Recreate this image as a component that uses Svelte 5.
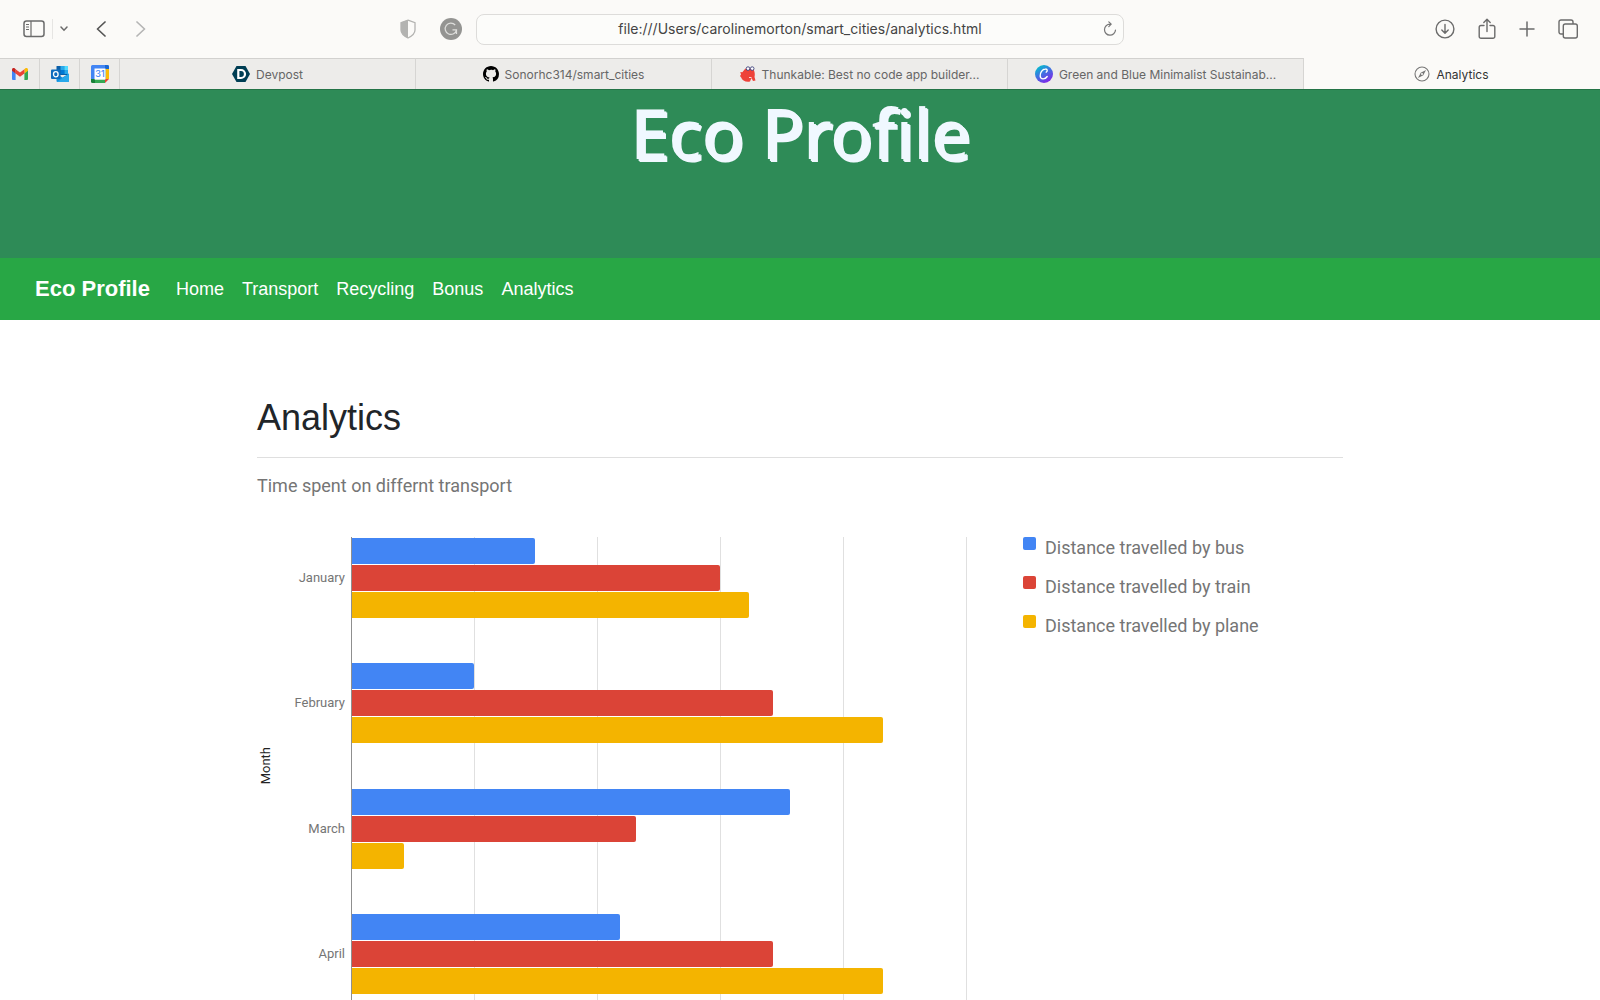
<script lang="ts">
  type Series = 'bus' | 'train' | 'plane';

  const url = 'file:///Users/carolinemorton/smart_cities/analytics.html';

  const tabs = [
    { icon: 'devpost', title: 'Devpost' },
    { icon: 'github', title: 'Sonorhc314/smart_cities' },
    { icon: 'thunkable', title: 'Thunkable: Best no code app builder...' },
    { icon: 'canva', title: 'Green and Blue Minimalist Sustainab...' },
    { icon: 'compass', title: 'Analytics', active: true }
  ];

  const links = ['Home', 'Transport', 'Recycling', 'Bonus', 'Analytics'];

  const series: Series[] = ['bus', 'train', 'plane'];

  const maxDistance = 1000;

  const months = [
    { name: 'January', bus: 298, train: 598, plane: 646 },
    { name: 'February', bus: 198, train: 684, plane: 864 },
    { name: 'March', bus: 712, train: 462, plane: 85 },
    { name: 'April', bus: 436, train: 684, plane: 864 }
  ];

  const barWidth = (value: number) => `${(value / maxDistance) * 100}%`;
</script>

<div class="browser">
  <div class="toolbar">
    <div class="tools left">
      <button class="tool" aria-label="Sidebar">
        <svg width="22" height="18" viewBox="0 0 22 18" fill="none" stroke="#6b6b6b" stroke-width="1.5">
          <rect x="1" y="1" width="20" height="15.5" rx="2.5" />
          <path d="M8 1v15.500M3 4.500h3M3 7h3M3 9.500h3" stroke-width="1.200" />
        </svg>
      </button>
      <span class="divider"></span>
      <button class="tool" aria-label="Tab groups">
        <svg width="8" height="6" viewBox="0 0 8 6" fill="none" stroke="#6b6b6b" stroke-width="1.500" stroke-linecap="round">
          <path d="M1 1l3 3.200L7 1" />
        </svg>
      </button>
      <button class="tool back" aria-label="Back">
        <svg width="10" height="16" viewBox="0 0 10 16" fill="none" stroke="#555" stroke-width="1.700" stroke-linecap="round" stroke-linejoin="round">
          <path d="M9 1L1.500 8 9 15" />
        </svg>
      </button>
      <button class="tool forward" aria-label="Forward">
        <svg width="10" height="16" viewBox="0 0 10 16" fill="none" stroke="#b5b5b5" stroke-width="1.700" stroke-linecap="round" stroke-linejoin="round">
          <path d="M1 1l7.500 7L1 15" />
        </svg>
      </button>
      <button class="tool shield" aria-label="Privacy report">
        <svg width="16" height="20" viewBox="0 0 16 20">
          <path d="M8 1.200L15 3.700V11c0 3.500-3 6-7 8-4-2-7-4.500-7-8V3.700z" fill="none" stroke="#b3b3b1" stroke-width="1.300" />
          <path d="M8 1L1 3.600V11c0 3.500 3 6 7 8z" fill="#b3b3b1" />
        </svg>
      </button>
      <button class="tool" aria-label="Grammarly">
        <svg width="22" height="22" viewBox="0 0 22 22">
          <circle cx="11" cy="11" r="11" fill="#949492" />
          <path d="M15.200 7A5.700 5.700 0 1 0 16.500 11.800H12.500M16.500 11.800v4.200" fill="none" stroke="#deDEdc" stroke-width="1.200" />
        </svg>
      </button>
    </div>

    <div class="address">
      <input type="text" value={url} aria-label="Address" />
      <button class="tool reload" aria-label="Reload">
        <svg width="14" height="16" viewBox="0 0 14 16" fill="none" stroke="#777" stroke-width="1.200" stroke-linecap="round" stroke-linejoin="round">
          <path d="M8 3.200H7A5.500 5.500 0 1 0 12.500 9M5.800.8L8.200 3.200 5.800 5.600" />
        </svg>
      </button>
    </div>

    <div class="tools right">
      <button class="tool" aria-label="Downloads">
        <svg width="20" height="20" viewBox="0 0 20 20" fill="none" stroke="#6b6b6b" stroke-width="1.400" stroke-linecap="round" stroke-linejoin="round">
          <circle cx="10" cy="10" r="8.900" />
          <path d="M10 5.500v8.500M6.800 11l3.200 3.200 3.200-3.200" />
        </svg>
      </button>
      <button class="tool" aria-label="Share">
        <svg width="18" height="22" viewBox="0 0 18 22" fill="none" stroke="#6b6b6b" stroke-width="1.400" stroke-linecap="round" stroke-linejoin="round">
          <path d="M6 7.500H3a1.800 1.800 0 0 0-1.800 1.800v9.200A1.800 1.800 0 0 0 3 20.300h12a1.800 1.800 0 0 0 1.800-1.800V9.300A1.800 1.800 0 0 0 15 7.500h-3M9 13.500V1.500M5.800 4.400L9 1.200l3.200 3.200" />
        </svg>
      </button>
      <button class="tool" aria-label="New tab">
        <svg width="16" height="16" viewBox="0 0 16 16" stroke="#6b6b6b" stroke-width="1.500" stroke-linecap="round">
          <path d="M8 1v14M1 8h14" />
        </svg>
      </button>
      <button class="tool" aria-label="Tab overview">
        <svg width="20" height="20" viewBox="0 0 20 20" fill="none" stroke="#6b6b6b" stroke-width="1.400">
          <rect x="5.300" y="5" width="14" height="14" rx="2" />
          <path d="M5.300 15H3a2 2 0 0 1-2-2V3a2 2 0 0 1 2-2h10a2 2 0 0 1 2 2v2" />
        </svg>
      </button>
    </div>
  </div>

  <div class="tab-bar">
    <button class="pinned" aria-label="Gmail">
      <svg width="16" height="12" viewBox="0 0 16 12">
        <path d="M0 2v9a1 1 0 0 0 1 1h2.600V5z" fill="#4285f4" />
        <path d="M16 2v9a1 1 0 0 1-1 1h-2.600V5z" fill="#34a853" />
        <path d="M12.400 1.200V5.500L16 2.800V1.500C16 .2 14.500-.5 13.400.3z" fill="#fbbc04" />
        <path d="M3.600 5.500V1.200L8 4.500l4.400-3.300V5.500L8 8.800z" fill="#ea4335" />
        <path d="M0 1.500v1.300l3.600 2.700V1.200L2.600.3C1.500-.5 0 .2 0 1.500z" fill="#c5221f" />
      </svg>
    </button>
    <button class="pinned" aria-label="Outlook">
      <svg width="18" height="16" viewBox="0 0 18 16">
        <path d="M6 0h10.500a.5.5 0 0 1 .5.500V9H5.500V.500A.5.5 0 0 1 6 0z" fill="#0a5ea8" />
        <path d="M9.500 0h3.800v4H9.500zM13.300 4H17v4h-3.700z" fill="#28a8ea" />
        <path d="M13.300 0H17v4h-3.700z" fill="#50d9ff" />
        <path d="M9.500 4h3.800v4H9.500z" fill="#0078d4" />
        <path d="M5.500 8l6 3.500L18 7.500V15a1 1 0 0 1-1 1H6.500a1 1 0 0 1-1-1z" fill="#1490df" />
        <path d="M18 7.500L6 15.900h11a1 1 0 0 0 1-1z" fill="#28a8ea" />
        <rect y="3.500" width="9.500" height="9.500" rx="1" fill="#0f6cbd" />
        <ellipse cx="4.800" cy="8.200" rx="2.300" ry="2.600" fill="none" stroke="#fff" stroke-width="1.300" />
      </svg>
    </button>
    <button class="pinned" aria-label="Calendar">
      <svg width="18" height="18" viewBox="0 0 18 18">
        <path d="M1.500 0H16.500A1.500 1.500 0 0 1 18 1.500V14H14V4H4v10H0V1.500A1.500 1.500 0 0 1 1.500 0z" fill="#4285f4" />
        <path d="M14 0h2.500A1.500 1.500 0 0 1 18 1.500V4h-4z" fill="#1967d2" />
        <path d="M14.500 4H18v10h-3.500z" fill="#fbbc04" />
        <path d="M4 14.500h10V18H4z" fill="#34a853" />
        <path d="M0 14h4v4H1.500A1.500 1.500 0 0 1 0 16.500z" fill="#188038" />
        <path d="M14 14h4l-4 4z" fill="#ea4335" />
        <path d="M3.500 3.500h11v11h-11z" fill="#fff" />
        <text x="9" y="12" text-anchor="middle" font-size="9" font-weight="500" fill="#4285f4">31</text>
      </svg>
    </button>

    {#each tabs as tab}
      <button class="tab" class:active={tab.active}>
        {#if tab.icon === 'devpost'}
          <svg width="18" height="18" viewBox="0 0 18 18">
            <path d="M4.500 1h9L18 9l-4.500 8h-9L0 9z" fill="#003e54" />
            <path d="M6.300 5v8H9a4 4 0 0 0 0-8z" fill="none" stroke="#fff" stroke-width="2.200" />
          </svg>
        {:else if tab.icon === 'github'}
          <svg width="16" height="16" viewBox="0 0 16 16">
            <path d="M8 0C3.580 0 0 3.580 0 8c0 3.540 2.290 6.530 5.470 7.590.4.070.55-.17.55-.38 0-.19-.01-.82-.01-1.490-2.010.37-2.530-.49-2.690-.94-.09-.23-.48-.94-.82-1.130-.28-.15-.68-.52-.01-.53.63-.01 1.080.58 1.230.82.72 1.210 1.870.87 2.330.66.070-.52.28-.87.51-1.070-1.780-.2-3.640-.89-3.640-3.950 0-.87.31-1.590.82-2.150-.08-.2-.36-1.020.08-2.120 0 0 .67-.21 2.200.82A7.600 7.600 0 0 1 8 3.860c.68 0 1.360.09 2 .27 1.530-1.040 2.200-.82 2.200-.82.44 1.100.16 1.920.08 2.120.51.56.82 1.270.82 2.150 0 3.070-1.870 3.750-3.650 3.950.29.25.54.73.54 1.480 0 1.070-.01 1.930-.01 2.200 0 .21.15.46.55.38A8.010 8.010 0 0 0 16 8c0-4.420-3.580-8-8-8z" fill="#000" />
          </svg>
        {:else if tab.icon === 'thunkable'}
          <svg width="16" height="16" viewBox="0 0 16 16">
            <path d="M5 3c2-1.500 6-1 8.500.5C15 6 15 9 14.500 11l1 3.500-2.500.500-1.500-3-1.500 3.500C6 16.500 2 14.500 1.200 11.500L0 10l1-1.500L.3 6l2 .2z" fill="#ee4239" />
            <path d="M9 11.500h2.500" stroke="#fff" stroke-width="0.800" />
            <circle cx="8" cy="2.600" r="1.800" fill="#fff" stroke="#3b3f7a" stroke-width="0.900" />
            <circle cx="12.200" cy="2.600" r="1.800" fill="#fff" stroke="#3b3f7a" stroke-width="0.900" />
          </svg>
        {:else if tab.icon === 'canva'}
          <svg width="18" height="18" viewBox="0 0 18 18">
            <defs>
              <linearGradient id="canva" x1="0" y1="0" x2="0.600" y2="1">
                <stop offset="0.100" stop-color="#00c4cc" />
                <stop offset="0.500" stop-color="#3a78e0" />
                <stop offset="1" stop-color="#7d2ae8" />
              </linearGradient>
            </defs>
            <circle cx="9" cy="9" r="9" fill="url(#canva)" />
            <path d="M11.200 7.200c1.600-.8 1.300-3.400-.8-3.200C7.200 4.200 5 8 5.200 11c.2 3.800 4.800 3.800 7 .5" fill="none" stroke="#fff" stroke-width="1.400" stroke-linecap="round" />
          </svg>
        {:else}
          <svg width="16" height="16" viewBox="0 0 16 16">
            <circle cx="8" cy="8" r="7" fill="none" stroke="#777" stroke-width="1.100" />
            <path d="M12 4L9.300 9.300 4 12l2.700-5.300z" fill="#777" />
            <circle cx="8" cy="8" r="1" fill="#fbfaf8" />
          </svg>
        {/if}
        <span>{tab.title}</span>
      </button>
    {/each}
  </div>
</div>

<header class="banner">
  <p class="banner-title">Eco Profile</p>
</header>

<nav class="navbar">
  <a href="#home" class="brand">Eco Profile</a>
  {#each links as link}
    <a href="#{link.toLowerCase()}" class="nav-link">{link}</a>
  {/each}
</nav>

<main class="container">
  <h1>Analytics</h1>
  <p class="chart-title">Time spent on differnt transport</p>

  <div class="chart">
    <div class="axis-title"><span>Month</span></div>

    <div class="months">
      {#each months as month}
        <div class="month">{month.name}</div>
      {/each}
    </div>

    <div class="plot">
      {#each months as month}
        <div class="group">
          {#each series as name}
            <div class="bar {name}" style="width: {barWidth(month[name])}"></div>
          {/each}
        </div>
      {/each}
    </div>

    <ul class="legend">
      {#each series as name}
        <li>
          <span class="swatch {name}"></span>
          Distance travelled by {name}
        </li>
      {/each}
    </ul>
  </div>
</main>

<style>
  :global(body) {
    margin: 0;
    background: #fff;
    font-family: 'Liberation Sans', Arial, sans-serif;
  }

  button {
    padding: 0;
    border: 0;
    background: none;
    font: inherit;
    color: inherit;
  }

  svg {
    display: block;
    flex: none;
  }

  .browser {
    background: #fbfaf8;
    font-family: Inter, sans-serif;
    border-bottom: 1px solid #247347;
  }

  .toolbar {
    display: grid;
    grid-template-columns: minmax(0, 1fr) minmax(0, 648px) minmax(0, 1fr);
    align-items: center;
    height: 58px;
  }

  .tools {
    display: flex;
    align-items: center;
  }

  .left {
    padding: 0 14px 0 23px;
  }

  .right {
    justify-content: flex-end;
    gap: 23px;
    padding-right: 22px;
  }

  .divider {
    width: 1px;
    height: 20px;
    margin: 0 7px;
    background: #e6e5e3;
  }

  .back {
    margin-left: 28px;
  }

  .forward {
    margin-left: 30px;
  }

  .shield {
    margin-left: auto;
    margin-right: 24px;
  }

  .address {
    position: relative;
  }

  .address input {
    box-sizing: border-box;
    width: 100%;
    height: 31px;
    padding: 0 32px 2px;
    border: 1px solid #dddcda;
    border-radius: 8px;
    background: #fcfcfa;
    color: #444;
    font-family: inherit;
    font-size: 14px;
    text-align: center;
  }

  .reload {
    position: absolute;
    top: 7px;
    right: 7px;
  }

  .tab-bar {
    display: flex;
    height: 31px;
  }

  .pinned,
  .tab {
    display: flex;
    align-items: center;
    justify-content: center;
    box-sizing: border-box;
    border-top: 1px solid #d2d1cf;
    border-right: 1px solid #d6d5d3;
    background: #edecea;
  }

  .pinned {
    width: 40px;
  }

  .tab {
    flex: 1;
    min-width: 0;
    gap: 6px;
    color: #666;
    font-size: 12px;
    white-space: nowrap;
  }

  .tab.active {
    border-color: transparent;
    background: none;
    color: #333;
  }

  .banner {
    box-sizing: border-box;
    min-height: 168px;
    background: #2e8b57;
    text-align: center;
  }

  .banner-title {
    margin: 0;
    color: aliceblue;
    font-family: 'Noto Sans', sans-serif;
    font-size: 69px;
    line-height: 84px;
    text-shadow:
      2px 2px aliceblue,
      3px 3px aliceblue;
  }

  .navbar {
    display: flex;
    align-items: center;
    gap: 18px;
    height: 62px;
    padding: 0 35px;
    background: #28a745;
  }

  .navbar a {
    color: #fff;
    text-decoration: none;
  }

  .brand {
    margin-right: 8px;
    font-size: 22px;
    font-weight: bold;
  }

  .nav-link {
    font-size: 18px;
  }

  .container {
    max-width: 1086px;
    margin: 0 auto;
    padding-top: 76px;
  }

  h1 {
    margin: 0 0 16px;
    padding-bottom: 17px;
    border-bottom: 1px solid #dfdfdf;
    color: #212529;
    font-size: 36px;
    font-weight: normal;
    line-height: 44px;
  }

  .chart-title {
    margin: 0 0 39px;
    color: #757575;
    font-family: Roboto, sans-serif;
    font-size: 18px;
    line-height: 24px;
  }

  .chart {
    display: grid;
    grid-template-columns: 16px 72px minmax(0, 1fr) 320px;
    height: 463px;
    font-family: Roboto, sans-serif;
  }

  .axis-title {
    display: flex;
    align-items: center;
    justify-content: center;
    padding-bottom: 6px;
    color: #222;
    font-size: 13px;
  }

  .axis-title span {
    writing-mode: vertical-rl;
    transform: rotate(180deg);
  }

  .months,
  .plot {
    display: flex;
    flex-direction: column;
    justify-content: space-between;
    padding: 1px 0 6px;
  }

  .month {
    color: #757575;
    font-size: 13px;
    line-height: 80px;
    text-align: right;
  }

  .plot {
    margin: 0 56px 0 6px;
    border-left: 1px solid #8f8f8f;
    background: repeating-linear-gradient(
      to right,
      transparent 0 calc(20% - 1px),
      #e0e0e0 calc(20% - 1px) 20%
    );
  }

  .group {
    display: flex;
    flex-direction: column;
    gap: 1px;
  }

  .bar {
    height: 26px;
    border-radius: 0 2px 2px 0;
  }

  .bus {
    background: #4285f4;
  }

  .train {
    background: #db4437;
  }

  .plane {
    background: #f4b400;
  }

  .legend {
    display: flex;
    flex-direction: column;
    gap: 17px;
    margin: 0;
    padding: 0;
    color: #757575;
    font-size: 18px;
    line-height: 22px;
    list-style: none;
  }

  .legend li {
    display: flex;
    align-items: flex-start;
    gap: 9px;
  }

  .swatch {
    width: 13px;
    height: 13px;
    border-radius: 2px;
  }
</style>
